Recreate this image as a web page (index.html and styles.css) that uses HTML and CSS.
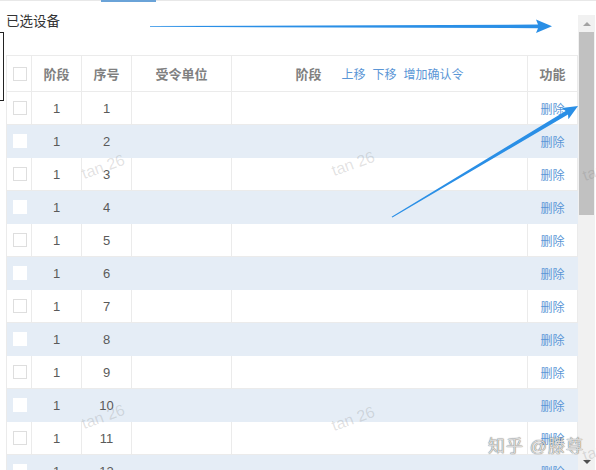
FILE: index.html
```html
<!DOCTYPE html>
<html lang="zh-CN">
<head>
<meta charset="utf-8">
<title>已选设备</title>
<link rel="stylesheet" href="styles.css">
</head>
<body>
<div class="topbar"><div class="tab-active"></div></div>
<div class="main">
  <div class="content">
    <div class="title">已选设备</div>
    <div class="table">
      <div class="row head">
        <div class="cell"><span class="cb"></span></div>
        <div class="cell">阶段</div>
        <div class="cell">序号</div>
        <div class="cell">受令单位</div>
        <div class="cell stage-head"><span>阶段</span><a class="link first">上移</a><a class="link">下移</a><a class="link">增加确认令</a></div>
        <div class="cell">功能</div>
      </div>
      <div class="row"><div class="cell"><span class="cb"></span></div><div class="cell">1</div><div class="cell">1</div><div class="cell"></div><div class="cell"></div><div class="cell"><a class="link">删除</a></div></div>
      <div class="row alt"><div class="cell"><span class="cb"></span></div><div class="cell">1</div><div class="cell">2</div><div class="cell"></div><div class="cell"></div><div class="cell"><a class="link">删除</a></div></div>
      <div class="row"><div class="cell"><span class="cb"></span></div><div class="cell">1</div><div class="cell">3</div><div class="cell"></div><div class="cell"></div><div class="cell"><a class="link">删除</a></div></div>
      <div class="row alt"><div class="cell"><span class="cb"></span></div><div class="cell">1</div><div class="cell">4</div><div class="cell"></div><div class="cell"></div><div class="cell"><a class="link">删除</a></div></div>
      <div class="row"><div class="cell"><span class="cb"></span></div><div class="cell">1</div><div class="cell">5</div><div class="cell"></div><div class="cell"></div><div class="cell"><a class="link">删除</a></div></div>
      <div class="row alt"><div class="cell"><span class="cb"></span></div><div class="cell">1</div><div class="cell">6</div><div class="cell"></div><div class="cell"></div><div class="cell"><a class="link">删除</a></div></div>
      <div class="row"><div class="cell"><span class="cb"></span></div><div class="cell">1</div><div class="cell">7</div><div class="cell"></div><div class="cell"></div><div class="cell"><a class="link">删除</a></div></div>
      <div class="row alt"><div class="cell"><span class="cb"></span></div><div class="cell">1</div><div class="cell">8</div><div class="cell"></div><div class="cell"></div><div class="cell"><a class="link">删除</a></div></div>
      <div class="row"><div class="cell"><span class="cb"></span></div><div class="cell">1</div><div class="cell">9</div><div class="cell"></div><div class="cell"></div><div class="cell"><a class="link">删除</a></div></div>
      <div class="row alt"><div class="cell"><span class="cb"></span></div><div class="cell">1</div><div class="cell">10</div><div class="cell"></div><div class="cell"></div><div class="cell"><a class="link">删除</a></div></div>
      <div class="row"><div class="cell"><span class="cb"></span></div><div class="cell">1</div><div class="cell">11</div><div class="cell"></div><div class="cell"></div><div class="cell"><a class="link">删除</a></div></div>
      <div class="row alt"><div class="cell"><span class="cb"></span></div><div class="cell">1</div><div class="cell">12</div><div class="cell"></div><div class="cell"></div><div class="cell"><a class="link">删除</a></div></div>
    </div>
  </div>
  <div class="scrollbar">
    <div class="sb-btn"><span class="tri-up"></span></div>
    <div class="sb-thumb"></div>
    <div class="sb-track"></div>
    <div class="sb-btn"><span class="tri-down"></span></div>
  </div>
</div>

<div class="bracket"></div>

<div class="overlay">
  <span class="wm wm1">tan 26</span>
  <span class="wm wm2">tan 26</span>
  <span class="wm wm3">tan 26</span>
  <span class="wm wm4">tan 26</span>
  <span class="wm wm5">tan 26</span>
  <span class="wm wm6">tan 26</span>

  <svg class="arrows" width="596" height="470" viewBox="0 0 596 470" xmlns="http://www.w3.org/2000/svg">
    <polygon fill="#2a8fe6" points="150,26.1 538,24.6 536,19.5 552,26.3 536,33 538,28.2 150,26.8"/>
    <polygon fill="#2a8fe6" points="391.6,216.7 565.6,110.9 561.8,108.1 578,106 568.4,119.3 568.0,114.6 392.4,217.4"/>
  </svg>

  <div class="zhihu">知乎 @滕尊</div>
</div>
</body>
</html>
```

FILE: styles.css
```css
html, body {
  margin: 0;
  padding: 0;
}
body {
  position: relative;
  width: 596px;
  height: 470px;
  overflow: hidden;
  background: #fff;
  font-family: "Liberation Sans", "Noto Sans CJK SC", sans-serif;
  color: #5a5a5a;
}
.topbar {
  height: 1px;
  background: #e8e8e8;
  display: flex;
}
.tab-active {
  margin-left: 101px;
  width: 55px;
  height: 2px;
  background: #6aa3d8;
}
.main {
  display: flex;
  height: 469px;
}
.content {
  width: 572px;
  padding-left: 6px;
  overflow: hidden;
}
.title {
  font-size: 13.5px;
  line-height: 20px;
  padding-top: 11px;
  color: #333;
}
.table {
  margin-top: 23px;
  border-left: 1px solid #ebebeb;
  width: 572px;
  box-sizing: border-box;
}
.row {
  display: grid;
  grid-template-columns: 25px 50px 50px 100px 296px 50px;
  height: 33px;
  box-sizing: border-box;
  border-bottom: 1px solid #ebebeb;
  background: #fff;
  font-size: 13px;
}
.row.head {
  height: 37px;
  border-top: 1px solid #ebebeb;
  font-weight: bold;
  color: #808080;
}
.row.alt {
  background: #e5edf6;
  border-bottom-color: #e5edf6;
}
.cell {
  border-right: 1px solid #ebebeb;
  display: flex;
  align-items: center;
  justify-content: center;
  white-space: nowrap;
}
.row.alt .cell {
  border-right-color: transparent;
}
.cb {
  width: 12px;
  height: 12px;
  background: #fff;
  border: 1px solid #dedede;
  margin-left: 1px;
}
.row.alt .cb {
  border-color: #fff;
}
.link {
  color: #5b96d6;
  font-size: 12px;
  font-weight: normal;
}
.stage-head .link {
  margin-left: 7px;
}
.stage-head .link.first {
  margin-left: 20px;
}
.scrollbar {
  width: 17px;
  margin-top: 14px;
  background: #f1f1f1;
  display: flex;
  flex-direction: column;
}
.sb-btn {
  height: 17px;
  display: flex;
  align-items: center;
  justify-content: center;
}
.sb-thumb {
  height: 183px;
  margin: 0 1px;
  background: #c1c1c1;
}
.sb-track {
  flex: 1;
}
.tri-up {
  width: 0;
  height: 0;
  border-left: 4px solid transparent;
  border-right: 4px solid transparent;
  border-bottom: 4px solid #a3a3a3;
}
.tri-down {
  width: 0;
  height: 0;
  border-left: 4px solid transparent;
  border-right: 4px solid transparent;
  border-top: 4px solid #505050;
}
.bracket {
  position: absolute;
  left: 0;
  top: 32px;
  width: 3px;
  height: 67px;
  border: 1px solid #222;
  border-left: none;
}
.overlay {
  position: absolute;
  left: 0;
  top: 0;
  width: 596px;
  height: 470px;
  overflow: hidden;
  pointer-events: none;
}
.wm {
  position: absolute;
  font-size: 16px;
  color: rgba(110, 110, 110, 0.2);
  transform: rotate(-20deg);
  white-space: nowrap;
}
.wm1 { left: 81px; top: 158px; }
.wm2 { left: 331px; top: 155px; }
.wm3 { left: 81px; top: 408px; }
.wm4 { left: 331px; top: 410px; }
.wm5 { left: 582px; top: 160px; }
.wm6 { left: 582px; top: 440px; }
.arrows {
  position: absolute;
  left: 0;
  top: 0;
}
.zhihu {
  position: absolute;
  left: 488px;
  top: 432px;
  font-size: 17px;
  color: rgba(235, 235, 235, 0.9);
  text-shadow: 0 0 1px rgba(0, 0, 0, 0.55), 0 0 1px rgba(0, 0, 0, 0.35);
  white-space: nowrap;
  letter-spacing: 1px;
}
```
